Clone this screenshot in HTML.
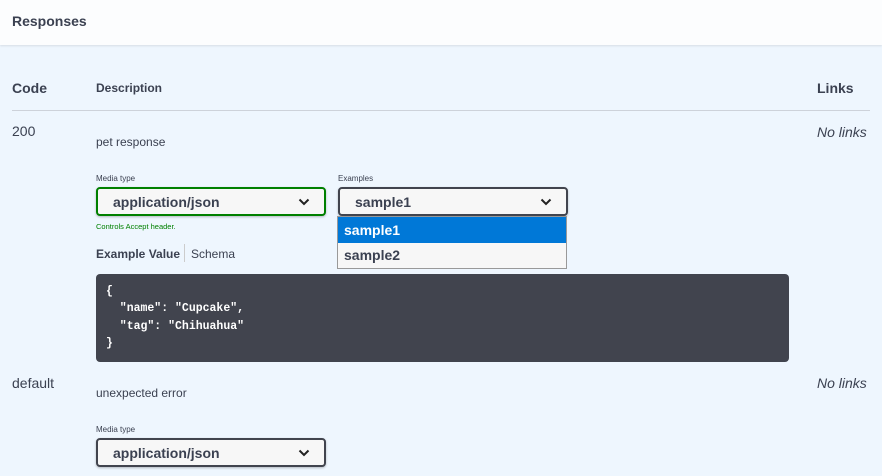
<!DOCTYPE html>
<html><head><style>
*{margin:0;padding:0;box-sizing:border-box}
body{width:882px;height:476px;overflow:hidden;background:#eef6fe;font-family:"Liberation Sans",sans-serif;color:#3b4151;position:relative}
.a{position:absolute;white-space:nowrap}
.hdr{position:absolute;left:0;top:0;width:882px;height:45px;background:#fcfdfe;box-shadow:0 1px 2px rgba(0,0,0,.1)}
.sel{position:absolute;height:29px;border-radius:4px;background:#f7f7f7;border:2px solid #41444e;font-weight:bold;font-size:14px;padding:5px 0 0 15px;box-shadow:0 1px 2px rgba(0,0,0,.25)}
.sel svg{position:absolute;right:14px;top:9px}
.lbl{font-size:8px;color:#3b4151}
.code{position:absolute;left:96px;top:274px;width:693px;height:88px;background:#41444e;border-radius:4px;color:#fff;font-family:"Liberation Mono",monospace;font-weight:bold;font-size:11.5px;line-height:17.3px;padding:9px 0 0 10px;white-space:pre}
</style></head><body>
<div class="hdr"></div>
<div class="a" style="left:12px;top:13px;font-size:14px;font-weight:bold">Responses</div>
<div class="a" style="left:12px;top:80px;font-size:14px;font-weight:bold">Code</div>
<div class="a" style="left:96px;top:81px;font-size:12px;font-weight:bold">Description</div>
<div class="a" style="left:817px;top:80px;font-size:14px;font-weight:bold">Links</div>
<div class="a" style="left:12px;top:110px;width:858px;height:1px;background:#cdd2da"></div>
<div class="a" style="left:12px;top:123px;font-size:14px">200</div>
<div class="a" style="left:96px;top:135px;font-size:12px">pet response</div>
<div class="a" style="left:817px;top:124px;font-size:14px;font-style:italic">No links</div>
<div class="a lbl" style="left:96px;top:174px">Media type</div>
<div class="sel" style="left:96px;top:187px;width:230px;border-color:#008000">application/json<svg width="12" height="8" viewBox="0 0 12 8"><path d="M1.5 1.5L6 6 10.5 1.5" stroke="#222" stroke-width="2" fill="none"/></svg></div>
<div class="a" style="left:96px;top:222px;font-size:7.5px;color:#008000">Controls Accept header.</div>
<div class="a lbl" style="left:338px;top:174px">Examples</div>
<div class="sel" style="left:338px;top:187px;width:230px">sample1<svg width="12" height="8" viewBox="0 0 12 8"><path d="M1.5 1.5L6 6 10.5 1.5" stroke="#222" stroke-width="2" fill="none"/></svg></div>
<div class="a" style="left:337px;top:216px;width:230px;height:53px;border:1px solid #999;background:#f7f7f7">
<div style="height:26px;background:#0078d7;color:#fff;font-weight:bold;font-size:14px;padding:5px 0 0 6px">sample1</div>
<div style="height:25px;font-weight:bold;font-size:14px;padding:4px 0 0 6px;color:#3b4151">sample2</div>
</div>
<div class="a" style="left:96px;top:247px;font-size:12px;font-weight:bold">Example Value</div>
<div class="a" style="left:184px;top:244px;width:1px;height:18px;background:#ccc"></div>
<div class="a" style="left:191px;top:247px;font-size:12px">Schema</div>
<div class="code">{
  "name": "Cupcake",
  "tag": "Chihuahua"
}</div>
<div class="a" style="left:12px;top:375px;font-size:14px">default</div>
<div class="a" style="left:96px;top:386px;font-size:12px">unexpected error</div>
<div class="a" style="left:817px;top:375px;font-size:14px;font-style:italic">No links</div>
<div class="a lbl" style="left:96px;top:425px">Media type</div>
<div class="sel" style="left:96px;top:438px;width:230px">application/json<svg width="12" height="8" viewBox="0 0 12 8"><path d="M1.5 1.5L6 6 10.5 1.5" stroke="#222" stroke-width="2" fill="none"/></svg></div>
</body></html>
